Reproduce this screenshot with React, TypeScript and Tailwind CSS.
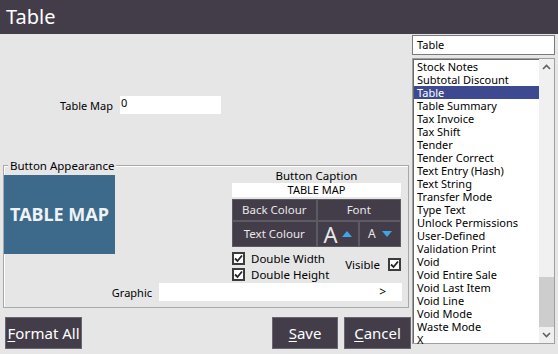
import React from "react";

const items = [
  "Stock Notes",
  "Subtotal Discount",
  "Table",
  "Table Summary",
  "Tax Invoice",
  "Tax Shift",
  "Tender",
  "Tender Correct",
  "Text Entry (Hash)",
  "Text String",
  "Transfer Mode",
  "Type Text",
  "Unlock Permissions",
  "User-Defined",
  "Validation Print",
  "Void",
  "Void Entire Sale",
  "Void Last Item",
  "Void Line",
  "Void Mode",
  "Waste Mode",
  "X",
];

function Check() {
  return (
    <span className="w-[13px] h-[13px] border-2 border-[#3c3c3c] bg-white flex items-center justify-center shrink-0">
      <svg width="9" height="9" viewBox="0 0 9 9">
        <path d="M1 4.5 L3.5 7 L8 1.5" stroke="#222" strokeWidth="1.8" fill="none" />
      </svg>
    </span>
  );
}

function Chevron({ up }: { up?: boolean }) {
  return (
    <svg width="9" height="6" viewBox="0 0 9 6">
      <path
        d={up ? "M1 5 L4.5 1.5 L8 5" : "M1 1 L4.5 4.5 L8 1"}
        stroke="#606060"
        strokeWidth="1.6"
        fill="none"
      />
    </svg>
  );
}

export default function App() {
  return (
    <div
      className="w-[558px] h-[354px] bg-[#e6e6e6] flex flex-col overflow-hidden text-[11px] text-black"
      style={{ fontFamily: '"Noto Sans", "Open Sans", sans-serif' }}
    >
      <div className="h-[34px] bg-[#433d4a] flex items-center pl-[6px] shrink-0">
        <span className="text-white text-[20px] leading-none">Table</span>
      </div>
      <div className="flex flex-1">
        {/* left */}
        <div className="w-[412px] flex flex-col">
          <div className="flex items-center mt-[62px] h-[18px]">
            <span className="w-[113px] text-right leading-none">Table Map</span>
            <div className="ml-[7px] w-[101px] h-[18px] bg-white text-[11px] leading-[14px] pl-px">0</div>
          </div>
          <div className="relative ml-[3px] mt-[51px] w-[406px] h-[143px] border border-[#a8a8a8] shadow-[inset_1px_1px_0_#ffffff]">
            <span className="absolute left-[4px] top-[-8px] px-[2px] bg-[#e6e6e6] text-[11.5px] leading-[15px]">Button Appearance</span>
            <div className="flex">
              <div className="mt-[9px] w-[111px] h-[79px] bg-[#3d6a8a] flex items-center justify-center text-[#eef2f5] font-bold text-[18px] whitespace-nowrap">
                TABLE MAP
              </div>
              <div className="ml-[117px] w-[169px] flex flex-col">
                <div className="h-[17px] leading-[17px] text-center pt-px text-[11.5px]">Button Caption</div>
                <div className="h-[14px] bg-white text-[11px] leading-[14px] text-center">TABLE MAP</div>
                <div className="mt-[2px] grid grid-cols-2 gap-[2px] bg-[#5e5a63] p-px h-[48px] text-[#e8e8e8] text-[11.5px]">
                  <div className="bg-[#433d4a] flex items-center justify-center">Back Colour</div>
                  <div className="bg-[#433d4a] flex items-center justify-center">Font</div>
                  <div className="bg-[#433d4a] flex items-center justify-center">Text Colour</div>
                  <div className="grid grid-cols-2 gap-[2px]">
                    <div className="bg-[#433d4a] flex items-center justify-center gap-[4px]">
                      <span className="text-[22px] leading-none">A</span>
                      <svg width="10" height="6" viewBox="0 0 10 6">
                        <path d="M0 6 L5 0 L10 6 Z" fill="#3fa4e8" />
                      </svg>
                    </div>
                    <div className="bg-[#433d4a] flex items-center justify-center gap-[6px]">
                      <span className="text-[12px] leading-none">A</span>
                      <svg width="10" height="6" viewBox="0 0 10 6">
                        <path d="M0 0 L10 0 L5 6 Z" fill="#3fa4e8" />
                      </svg>
                    </div>
                  </div>
                </div>
                <div className="flex mt-[5px] text-[11.5px]">
                  <div className="flex flex-col gap-[3px]">
                    <div className="flex items-center gap-[6px] h-[13px]">
                      <Check />
                      <span className="leading-none">Double Width</span>
                    </div>
                    <div className="flex items-center gap-[6px] h-[13px]">
                      <Check />
                      <span className="leading-none">Double Height</span>
                    </div>
                  </div>
                  <div className="ml-auto mt-[6px] flex items-center gap-[8px] h-[13px]">
                    <span className="leading-none">Visible</span>
                    <Check />
                  </div>
                </div>
              </div>
            </div>
            <div className="flex items-center mt-[2px] h-[18px]">
              <span className="w-[148px] text-right leading-none">Graphic</span>
              <div className="ml-[7px] w-[243px] h-[18px] bg-white flex items-center justify-end pr-[16px] text-[12px]">
                &gt;
              </div>
            </div>
          </div>
          <div className="flex mt-[9px] h-[32px] text-[15px] leading-none">
            <button className="ml-[5px] w-[77px] bg-[#433d4a] text-white border border-[#6a6570] whitespace-nowrap">
              <span className="underline underline-offset-2">F</span>ormat All
            </button>
            <button className="ml-auto w-[66px] bg-[#433d4a] text-white border border-[#6a6570] whitespace-nowrap">
              <span className="underline underline-offset-2">S</span>ave
            </button>
            <button className="ml-[6px] mr-[1px] w-[67px] bg-[#433d4a] text-white border border-[#6a6570] whitespace-nowrap">
              <span className="underline underline-offset-2">C</span>ancel
            </button>
          </div>
        </div>
        {/* right */}
        <div className="flex flex-col mt-[1px] w-[143px]">
          <div className="h-[20px] bg-white border border-[#7a7a7a] pl-[4px] leading-[18px]">Table</div>
          <div className="mt-[3px] h-[286px] bg-white border border-[#a0a0a0] shadow-[inset_1px_1px_0_#696969] flex">
            <div className="flex-1 pt-px pl-px">
              {items.map((it) => (
                <div
                  key={it}
                  className={
                    "h-[13px] leading-[13px] pl-[3px] whitespace-nowrap " +
                    (it === "Table" ? "bg-[#3d4a8f] text-white" : "")
                  }
                >
                  {it}
                </div>
              ))}
            </div>
            <div className="w-[15px] bg-[#f0f0f0] flex flex-col items-center">
              <div className="h-[17px] flex items-center justify-center">
                <Chevron up />
              </div>
              <div className="flex-1 w-full flex flex-col">
                <div className="h-[202px]" />
                <div className="h-[50px] bg-[#cdcdcd]" />
              </div>
              <div className="h-[17px] flex items-center justify-center">
                <Chevron />
              </div>
            </div>
          </div>
        </div>
      </div>
    </div>
  );
}
